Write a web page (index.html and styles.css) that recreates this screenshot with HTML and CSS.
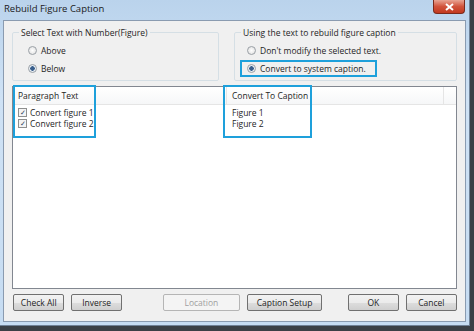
FILE: index.html
```html
<!DOCTYPE html>
<html lang="en">
<head>
  <meta charset="UTF-8">
  <title>Rebuild Figure Caption</title>
  <link rel="stylesheet" href="styles.css">
</head>
<body>

  <div class="window">
    <div class="titlebar">
      <span class="title">Rebuild Figure Caption</span>
      <span class="close">
        <svg width="9" height="8" viewBox="0 0 9 8"><path d="M1 1 L8 7 M8 1 L1 7" stroke="#fff" stroke-width="2"/></svg>
      </span>
    </div>

    <div class="client">
      <div class="groups">
        <fieldset class="group left">
          <legend>Select Text with Number(Figure)</legend>
          <label class="radio"><span class="dot"></span>Above</label>
          <label class="radio"><span class="dot on"></span>Below</label>
        </fieldset>
        <fieldset class="group right">
          <legend>Using the text to rebuild figure caption</legend>
          <label class="radio"><span class="dot"></span>Don't modify the selected text.</label>
          <label class="radio mark"><span class="dot on"></span>Convert to system caption.</label>
        </fieldset>
      </div>

      <div class="list">
        <div class="header">
          <div class="col c1">Paragraph Text</div>
          <div class="col c2">Convert To Caption</div>
          <div class="col c3"></div>
        </div>
        <div class="rows">
          <div class="col c1">
            <div class="item"><span class="check">&#10003;</span>Convert figure 1</div>
            <div class="item"><span class="check">&#10003;</span>Convert figure 2</div>
          </div>
          <div class="col c2">
            <div class="item">Figure 1</div>
            <div class="item">Figure 2</div>
          </div>
        </div>
        <!-- highlight boxes drawn over the list -->
        <span class="box box1"></span>
        <span class="box box2"></span>
      </div>

      <div class="buttons">
        <button class="w52">Check All</button>
        <button class="w50">Inverse</button>
        <button class="w78 gap" disabled>Location</button>
        <button class="w76">Caption Setup</button>
        <button class="w51 gap2">OK</button>
        <button class="w52">Cancel</button>
      </div>
    </div>
  </div>

</body>
</html>
```

FILE: styles.css
```css
body {
  margin: 0;
  background: #3b4046;
  font-family: "Open Sans", "Liberation Sans", sans-serif;
  font-size: 8.5px;
  color: #1e1e1e;
}
.window {
  width: 470px;
  height: 326px;
  display: flex;
  flex-direction: column;
  background: linear-gradient(#bad3ec, #cfe2f5 30%, #c6dcf2);
  box-sizing: border-box;
  border-right: 1px solid #6f8196;
  border-bottom: 1px solid #6f8196;
}
.titlebar {
  height: 20px;
  display: flex;
  justify-content: space-between;
  align-items: flex-start;
  padding-left: 4px;
}
.title {
  font-size: 9.5px;
  line-height: 18px;
  color: #1a1a1a;
}
.close {
  width: 32px;
  height: 14px;
  margin-right: 4px;
  background: linear-gradient(#e8a493, #d1533c 50%, #c2391f);
  border: 1px solid #7a2a1c;
  border-top: none;
  border-radius: 0 0 4px 4px;
  display: flex;
  align-items: center;
  justify-content: center;
  box-sizing: border-box;
}
.client {
  flex: 1;
  margin: 0 3px 3px 3px;
  background: #f0f0f0;
  border: 1px solid #8a9bb0;
  display: flex;
  flex-direction: column;
  padding: 6px 8px 10px 8px;
}
.groups {
  display: flex;
  gap: 15px;
}
.group {
  margin: 0;
  border: 1px solid #d5dfe5;
  border-radius: 2px;
  padding: 5px 0 4px 0;
  display: flex;
  flex-direction: column;
  gap: 4px;
}
.group legend {
  padding: 0 2px;
  margin-left: 6px;
}
.group.left { width: 207px; box-sizing: border-box; }
.group.right { flex: 1; }
.group.left .radio { margin-left: 15px; }
.group.right .radio { margin-left: 12px; }
.radio {
  display: flex;
  align-items: center;
  gap: 4px;
  height: 14px;
}
.dot {
  width: 7px;
  height: 7px;
  border-radius: 50%;
  border: 1px solid #9aa0a6;
  background: radial-gradient(#ffffff, #dcdcdc);
}
.dot.on {
  background: radial-gradient(circle, #3a5f8c 0 2px, #e8eef4 2.5px);
}
.group.right .radio.mark {
  width: 135px;
  height: 15px;
  margin-left: 6px;
  padding-left: 6px;
  box-sizing: border-box;
  outline: 2px solid #1ea0db;
  outline-offset: -1px;
}
.list {
  position: relative;
  margin-top: 5px;
  flex: 1;
  background: #fff;
  border: 1px solid #828790;
  display: flex;
  flex-direction: column;
}
.header {
  display: flex;
  height: 17px;
  border-bottom: 1px solid #e5e5e5;
  background: linear-gradient(#ffffff, #f6f7f8);
}
.header .col {
  line-height: 17px;
  padding-left: 5px;
  border-right: 1px solid #e5e5e5;
}
.col.c1 { width: 214px; box-sizing: border-box; }
.col.c2 { width: 217px; box-sizing: border-box; }
.col.c3 { flex: 1; border-right: none; }
.rows {
  display: flex;
}
.rows .col {
  padding: 2px 0 6px 5px;
}
.item {
  display: flex;
  align-items: center;
  height: 11px;
  gap: 3px;
}
.check {
  width: 7px;
  height: 7px;
  border: 1px solid #8e8f8f;
  background: #f4f4f4;
  color: #2a3c5a;
  font-size: 7px;
  line-height: 7px;
  text-align: center;
}
.box {
  position: absolute;
  top: -2px;
  height: 53px;
  border: 2px solid #1ea0db;
  box-sizing: border-box;
}
.box1 { left: 0; width: 83px; }
.box2 { left: 210px; width: 89px; }
.buttons {
  display: flex;
  gap: 7px;
  margin-top: 5px;
  padding-left: 1px;
}
button {
  height: 17px;
  padding: 0;
  font-family: inherit;
  font-size: 8.5px;
  color: #1e1e1e;
  border: 1px solid #707070;
  border-radius: 2px;
  background: linear-gradient(#f2f2f2, #ebebeb 50%, #dddddd 51%, #cfcfcf);
}
button:disabled {
  color: #a0a0a0;
  border-color: #b5b5b5;
  background: #f4f4f4;
}
.w52 { width: 52px; }
.w50 { width: 51px; }
.w78 { width: 78px; }
.w76 { width: 76px; }
.w51 { width: 51px; }
.gap { margin-left: 34px; }
.gap2 { margin-left: 19px; }
```
